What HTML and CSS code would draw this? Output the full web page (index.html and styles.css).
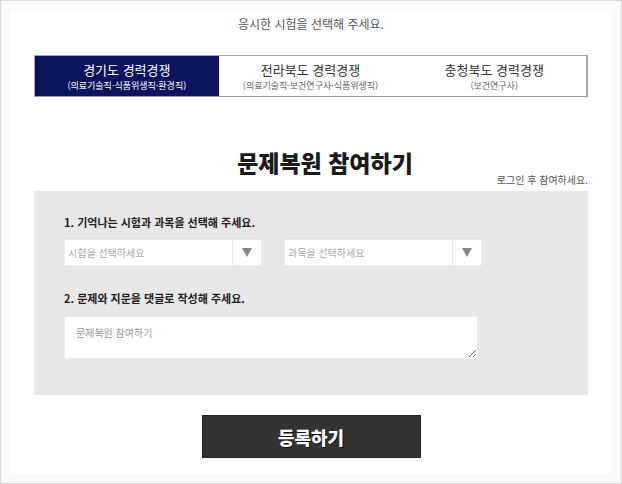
FILE: index.html
```html
<!DOCTYPE html>
<html lang="ko">
<head>
    <meta charset="UTF-8">
    <meta name="viewport" content="width=device-width, initial-scale=1.0">
    <title>문제복원 참여하기</title>
    <link rel="stylesheet" href="styles.css">
</head>
<body>
    <div class="page">
        <div class="inner">
            <p class="guide">응시한 시험을 선택해 주세요.</p>

            <div class="tabs">
                <a href="#" class="tab active">
                    <span class="tab-title">경기도 경력경쟁</span>
                    <span class="tab-sub">(의료기술직·식품위생직·환경직)</span>
                </a>
                <a href="#" class="tab">
                    <span class="tab-title">전라북도 경력경쟁</span>
                    <span class="tab-sub">(의료기술직·보건연구사·식품위생직)</span>
                </a>
                <a href="#" class="tab">
                    <span class="tab-title">충청북도 경력경쟁</span>
                    <span class="tab-sub">(보건연구사)</span>
                </a>
            </div>

            <h1 class="main-title">문제복원 참여하기</h1>
            <p class="login-note">로그인 후 참여하세요.</p>

            <div class="form-box">
                <p class="form-label">1. 기억나는 시험과 과목을 선택해 주세요.</p>
                <div class="select-row">
                    <div class="select">
                        <span class="select-text">시험을 선택하세요</span>
                        <span class="select-arrow"></span>
                    </div>
                    <div class="select">
                        <span class="select-text">과목을 선택하세요</span>
                        <span class="select-arrow"></span>
                    </div>
                </div>

                <p class="form-label second">2. 문제와 지문을 댓글로 작성해 주세요.</p>
                <textarea class="comment" placeholder="문제복원 참여하기"></textarea>
            </div>

            <div class="btn-wrap">
                <button class="submit-btn">등록하기</button>
            </div>
        </div>
    </div>
</body>
</html>
```

FILE: styles.css
```css
* {
    box-sizing: border-box;
}
body {
    margin: 0;
    padding: 0;
    font-family: "Noto Sans CJK KR", "Noto Sans", sans-serif;
    color: #333;
    background-color: #fff;
}
p {
    margin: 0;
}
.page {
    height: 484px;
    border: 1px solid #d9d9d9;
    padding: 9px;
    background-color: #fafafa;
}
.inner {
    height: 100%;
    padding: 5px 24px 0;
    background-color: #fff;
}
.guide {
    font-size: 12px;
    line-height: 18px;
    color: #555;
    text-align: center;
}

/* 지역 탭 */
.tabs {
    display: flex;
    margin-top: 22px;
    height: 42px;
    border: 1px solid #a8a8a8;
    border-right-width: 2px;
    border-bottom-color: #999;
}
.tab {
    flex: 1;
    display: flex;
    flex-direction: column;
    align-items: center;
    padding-top: 4px;
    color: #333;
    text-decoration: none;
    background-color: #fff;
}
.tab.active {
    background-color: #0c1460;
    color: #fff;
}
.tab-title {
    font-size: 13px;
    line-height: 19px;
}
.tab-sub {
    font-size: 9px;
    line-height: 13px;
    color: #666;
}
.tab.active .tab-sub {
    color: #fff;
}

.main-title {
    margin: 50px 0 0;
    padding-left: 28px;
    font-size: 23px;
    line-height: 30px;
    font-weight: 900;
    color: #1a1a1a;
    text-align: center;
}
.login-note {
    margin-top: -4px;
    font-size: 10px;
    line-height: 14px;
    color: #555;
    text-align: right;
}

/* 입력 영역 */
.form-box {
    margin-top: 4px;
    height: 204px;
    padding: 23px 30px 0;
    background-color: #e8e8e8;
}
.form-label {
    font-size: 11px;
    line-height: 16px;
    font-weight: 700;
    color: #222;
}
.form-label.second {
    margin-top: 24px;
}
.select-row {
    display: flex;
    gap: 22px;
    margin-top: 9px;
}
.select {
    display: flex;
    width: 198px;
    height: 27px;
    background-color: #fff;
    border: 1px solid #ececec;
}
.select-text {
    flex: 1;
    padding-left: 3px;
    font-size: 10px;
    line-height: 25px;
    color: #aaa;
}
.select-arrow {
    width: 29px;
    border-left: 1px solid #e6e6e6;
    display: flex;
    align-items: center;
    justify-content: center;
}
.select-arrow::after {
    content: "";
    border-left: 5px solid transparent;
    border-right: 5px solid transparent;
    border-top: 9px solid #888;
}
.comment {
    display: block;
    margin-top: 10px;
    width: 414px;
    height: 43px;
    padding: 8px 11px;
    border: 1px solid #ececec;
    font-family: "Noto Sans CJK KR", sans-serif;
    font-size: 10px;
    line-height: 16px;
    color: #333;
}
.comment::placeholder {
    color: #999;
}

.btn-wrap {
    display: flex;
    justify-content: center;
    margin-top: 20px;
}
.submit-btn {
    width: 219px;
    height: 43px;
    border: 1px solid #222;
    background-color: #333;
    color: #fff;
    font-family: "Noto Sans CJK KR", sans-serif;
    font-size: 18px;
    font-weight: 900;
    text-shadow: 1px 1px 0 #111;
    cursor: pointer;
}
```
